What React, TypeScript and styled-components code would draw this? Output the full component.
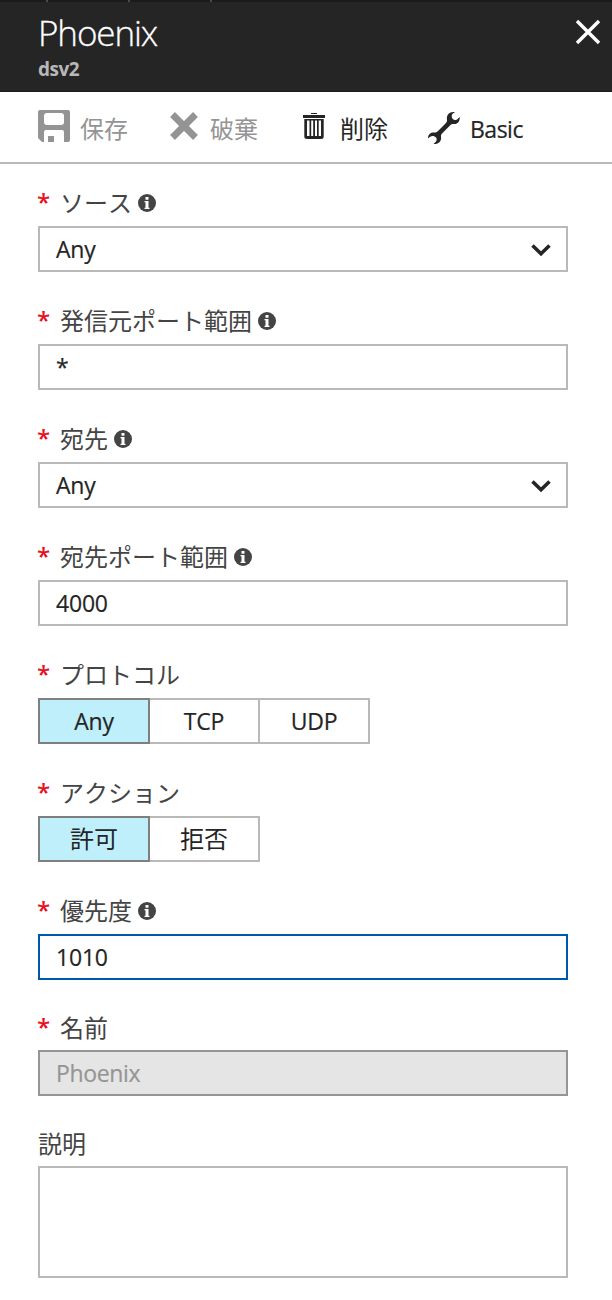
import React from "react";
import styled, { createGlobalStyle, css } from "styled-components";

const Global = createGlobalStyle`
  * { box-sizing: border-box; }
  body { margin: 0; background: #fff; }
  button, input, textarea { margin: 0; border-radius: 0; outline: none; font: inherit; letter-spacing: inherit; }
  button { cursor: pointer; }
`;

const Blade = styled.main`
  width: 612px;
  height: 1300px;
  overflow: hidden;
  background: #fff;
  color: #252525;
  font: 400 23px/32px "Open Sans", "Noto Sans CJK JP", sans-serif;
`;

const TopStrip = styled.div`
  display: flex;
  height: 2px;
  padding-left: 46px;
  gap: 80px;
  background: #1b1b1b;
`;

const Tick = styled.i`
  width: 2px;
  height: 2px;
  background: #4a4a4a;
`;

const Header = styled.header`
  display: flex;
  justify-content: space-between;
  height: 90px;
  padding: 7px 11px 0 38px;
  background: #252525;
  border-bottom: 1px solid #1d1d1d;
`;

const Title = styled.h1`
  margin: 0;
  color: #fff;
  font-size: 35px;
  font-weight: 300;
  line-height: 48px;
  letter-spacing: -1.1px;
  -webkit-text-stroke: 0.3px #fff;
`;

const Subtitle = styled.p`
  margin: 1px 0 0;
  color: #b8b8b8;
  font-size: 19px;
  font-weight: 700;
  line-height: 22px;
  letter-spacing: -0.5px;
`;

const CloseButton = styled.button`
  align-self: flex-start;
  display: flex;
  margin-top: 10px;
  padding: 0;
  border: 0;
  background: none;
`;

const Toolbar = styled.nav`
  display: flex;
  height: 72px;
  border-bottom: 2px solid #b9b9b9;
  padding-left: 38px;
`;

const Command = styled.button<{ $width: number; $gap: number; $muted?: boolean }>`
  display: flex;
  align-items: flex-start;
  gap: ${(p) => p.$gap}px;
  width: ${(p) => p.$width}px;
  padding: 18px 0 0;
  border: 0;
  background: none;
  color: ${(p) => (p.$muted ? "#949494" : "#252525")};
  font-size: 24px;
  text-align: left;
  white-space: nowrap;
`;

const CommandText = styled.span<{ $latin?: boolean }>`
  padding-top: 3px;
  ${(p) => p.$latin && css`font-size: 23px; letter-spacing: -0.5px; -webkit-text-stroke: 0.2px;`}
`;

const Form = styled.form`
  display: flex;
  flex-direction: column;
  gap: 26px;
  padding: 16px 44px 0 38px;
`;

const FieldBox = styled.div`
  display: flex;
  flex-direction: column;
`;

const Label = styled.div<{ $short?: boolean }>`
  display: flex;
  align-items: center;
  height: ${(p) => (p.$short ? 44 : 46)}px;
  color: #444;
  font-size: 24px;
  font-kerning: none;
`;

const Required = styled.span`
  width: 23px;
  margin-left: -1px;
  padding-bottom: 2px;
  color: #e81123;
  font-weight: 600;
`;

const InfoIcon = styled.svg`
  margin-left: 6px;
`;

const control = css`
  width: 100%;
  height: 46px;
  padding: 0 16px;
  border: 2px solid #b9b9b9;
  background: #fff;
  color: #252525;
  letter-spacing: -0.2px;
  -webkit-text-stroke: 0.2px;
`;

const TextInput = styled.input<{ $focused?: boolean }>`
  ${control}
  ${(p) => p.$focused && css`border-color: #0058ad;`}
  &:disabled {
    border-color: #959595;
    background: #e5e5e5;
    color: #959595;
    letter-spacing: -0.35px;
  }
`;

const Select = styled.button`
  ${control}
  display: flex;
  align-items: center;
  justify-content: space-between;
  padding-right: 15px;
`;

const TextArea = styled.textarea`
  ${control}
  display: block;
  height: 112px;
  resize: none;
`;

const Segments = styled.div`
  display: flex;
`;

const Segment = styled.button<{ $on?: boolean }>`
  width: ${(p) => (p.$on ? 112 : 110)}px;
  height: 46px;
  padding: 0;
  border: 2px solid ${(p) => (p.$on ? "#7f7f7f" : "#b9b9b9")};
  ${(p) => !p.$on && "border-left: 0;"}
  background: ${(p) => (p.$on ? "#bfeffb" : "#fff")};
  color: #252525;
  letter-spacing: -0.2px;
  -webkit-text-stroke: 0.2px;
`;

const Wide = styled.span`
  font-size: 24px;
  letter-spacing: 0;
  -webkit-text-stroke: 0;
`;

function Info() {
  return (
    <InfoIcon width="18" height="18" viewBox="0 0 18 18">
      <circle cx="9" cy="9" r="9" fill="#444" />
      <path fill="#fff" d="M7.500 3h3v2.700h-3zM6.500 7h4v6.800h1V15h-5v-1.200h1V8.200h-1z" />
    </InfoIcon>
  );
}

function Chevron() {
  return (
    <svg width="20" height="16" viewBox="0 0 20 16">
      <path d="M1.500 4.500 10 12.700 18.500 4.500" fill="none" stroke="#252525" strokeWidth="3.600" />
    </svg>
  );
}

interface FieldProps {
  label: string;
  optional?: boolean;
  info?: boolean;
  short?: boolean;
  children: React.ReactNode;
}

function Field({ label, optional, info, short, children }: FieldProps) {
  return (
    <FieldBox>
      <Label $short={short}>
        {!optional && <Required>*</Required>}
        <span>{label}</span>
        {info && <Info />}
      </Label>
      {children}
    </FieldBox>
  );
}

export default function App() {
  return (
    <Blade>
      <Global />
      <TopStrip><Tick /><Tick /><Tick /></TopStrip>
      <Header>
        <div>
          <Title>Phoenix</Title>
          <Subtitle>dsv2</Subtitle>
        </div>
        <CloseButton aria-label="閉じる">
          <svg width="26" height="26" viewBox="0 0 26 26">
            <path d="M2 2 24 24M24 2 2 24" stroke="#fff" strokeWidth="3.400" />
          </svg>
        </CloseButton>
      </Header>
      <Toolbar>
        <Command $width={132} $gap={10} $muted>
          <svg width="32" height="32" viewBox="0 0 32 32">
            <path
              fill="currentColor"
              fillRule="evenodd"
              d="M2 0H30Q32 0 32 2V30Q32 32 30 32H26V22Q26 20 24 20H8Q6 20 6 22V32H4L0 28V2Q0 0 2 0ZM9 3Q6 3 6 6V12Q6 15 9 15H23Q26 15 26 12V6Q26 3 23 3ZM10 26H16V32H10Z"
            />
          </svg>
          <CommandText>保存</CommandText>
        </Command>
        <Command $width={133} $gap={11} $muted>
          <svg width="29" height="32" viewBox="0 0 29 32">
            <path d="M2.500 4.500 25.500 27.500M25.500 4.500 2.500 27.500" stroke="currentColor" strokeWidth="6.800" />
          </svg>
          <CommandText>破棄</CommandText>
        </Command>
        <Command $width={125} $gap={15}>
          <svg width="22" height="32" viewBox="0 0 22 32">
            <path
              fill="currentColor"
              fillRule="evenodd"
              d="M8 3H14V4H8ZM0 5H22V8H0ZM1.300 9H20.700V26.500Q20.700 29 18 29H4Q1.300 29 1.300 26.500ZM4 10.500V26H6.500V10.500ZM8.200 10.500V26H10.200V10.500ZM12 10.500V26H14V10.500ZM15.700 10.500V26H18V10.500Z"
            />
          </svg>
          <CommandText>削除</CommandText>
        </Command>
        <Command $width={110} $gap={10}>
          <svg width="32" height="34" viewBox="0 0 32 34">
            <path
              fill="currentColor"
              d="M27 2.300C22 1 18 5 19 10C19.200 11.500 18.500 12.500 17 14L10 21C8.500 22.500 7.500 22.700 6 22.500C2.500 22 0 24.500 0 28.500C2 26.500 4 25.500 6.500 26.500C9 27.500 9.200 30 8 31.500L5.500 34C10 34.500 14 31.500 13 26.500C12.700 25 13.500 24 15 22.500L22 15.500C23.500 14 24.500 13.700 26 14C29.500 14.500 32 11 31.800 7L29 9.500C26.500 11 23.500 9 23.700 6C23.800 4 25 3.200 27 2.300Z"
            />
          </svg>
          <CommandText $latin>Basic</CommandText>
        </Command>
      </Toolbar>
      <Form>
        <Field label="ソース" info>
          <Select type="button">Any<Chevron /></Select>
        </Field>
        <Field label="発信元ポート範囲" info>
          <TextInput defaultValue="*" />
        </Field>
        <Field label="宛先" info>
          <Select type="button">Any<Chevron /></Select>
        </Field>
        <Field label="宛先ポート範囲" info>
          <TextInput defaultValue="4000" />
        </Field>
        <Field label="プロトコル">
          <Segments>
            <Segment type="button" $on>Any</Segment>
            <Segment type="button">TCP</Segment>
            <Segment type="button">UDP</Segment>
          </Segments>
        </Field>
        <Field label="アクション">
          <Segments>
            <Segment type="button" $on><Wide>許可</Wide></Segment>
            <Segment type="button"><Wide>拒否</Wide></Segment>
          </Segments>
        </Field>
        <Field label="優先度" info>
          <TextInput defaultValue="1010" $focused />
        </Field>
        <Field label="名前" short>
          <TextInput defaultValue="Phoenix" disabled />
        </Field>
        <Field label="説明" optional short>
          <TextArea />
        </Field>
      </Form>
    </Blade>
  );
}
